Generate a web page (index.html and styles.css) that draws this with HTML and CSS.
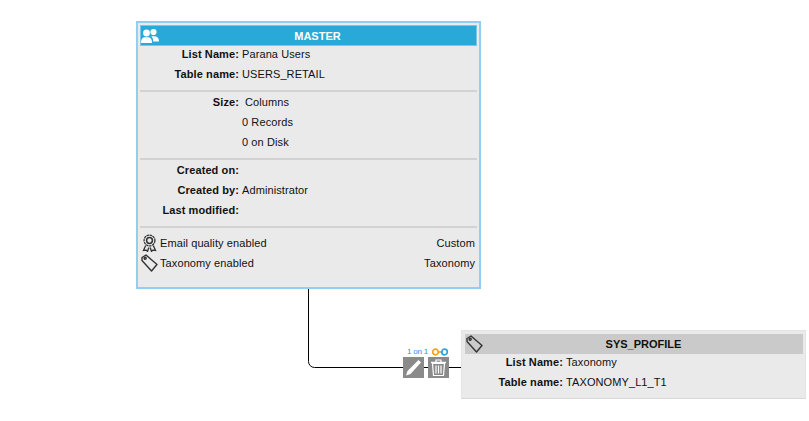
FILE: index.html
```html
<!DOCTYPE html>
<html lang="en">
<head>
<meta charset="utf-8">
<title>Data model</title>
<link rel="stylesheet" href="styles.css">
</head>
<body>
<main class="canvas">
  <svg class="wire" width="809" height="421" viewBox="0 0 809 421" aria-hidden="true">
    <path d="M308.500 289V361.500a6 6 0 0 0 6 6H461" fill="none" stroke="#000" stroke-width="1"/>
  </svg>

  <section class="node node-master">
    <header class="head head-blue">
      <svg class="head-icon" width="18" height="16" viewBox="0 0 18 16" fill="#fff"><circle cx="5.500" cy="5" r="3.400"/><path d="M0 15c0-3.500.8-5 3-5.800h5c2.200.8 3 2.300 3 5.800z"/><circle cx="12.500" cy="4" r="3.100"/><path d="M11 8.200h3.500c2.400.7 3.500 2.200 3.500 5.300h-5.800c0-2.500-.7-4-1.900-4.900z"/></svg>
      <span class="head-title">MASTER</span>
    </header>
    <div class="group">
      <div class="row"><b>List Name:</b><span>Parana Users</span></div>
      <div class="row"><b>Table name:</b><span>USERS_RETAIL</span></div>
    </div>
    <div class="group">
      <div class="row"><b>Size:</b><span class="ind">Columns</span></div>
      <div class="row"><b></b><span>0 Records</span></div>
      <div class="row"><b></b><span>0 on Disk</span></div>
    </div>
    <div class="group">
      <div class="row"><b>Created on:</b><span></span></div>
      <div class="row"><b>Created by:</b><span>Administrator</span></div>
      <div class="row"><b>Last modified:</b><span></span></div>
    </div>
    <div class="features">
      <div class="feature">
        <svg class="feature-icon" width="18" height="18" viewBox="0 0 18 18" fill="none" stroke="#333" stroke-width="1.300"><circle cx="8.500" cy="6.500" r="5.400" stroke-dasharray="2.500 .6"/><circle cx="8.500" cy="6.500" r="2.900" stroke-width="1.500"/><path d="M4.700 11.500L2.500 16.500l2.700-.4 1.300 1.400 1.300-4M12.300 11.500l2.200 5-2.700-.4-1.300 1.400-1.300-4"/></svg>
        <span class="feature-name">Email quality enabled</span><span>Custom</span>
      </div>
      <div class="feature">
        <svg class="feature-icon" width="18" height="18" viewBox="0 0 18 18" fill="none" stroke="#333" stroke-width="1.400"><path d="M1 3.500L5 1l11 9.500-5.500 6.500L1 6.500z" stroke-linejoin="round"/><circle cx="4.200" cy="4.300" r="1"/></svg>
        <span class="feature-name">Taxonomy enabled</span><span>Taxonomy</span>
      </div>
    </div>
  </section>

  <div class="link-label">1 on 1</div>
  <svg class="link-ends" width="17" height="8" viewBox="0 0 17 8" fill="none" stroke-width="1.700"><path d="M6 4h5" stroke="#777" stroke-width="1"/><circle cx="3.500" cy="4" r="2.800" stroke="#f7a11a"/><circle cx="12.500" cy="4" r="2.800" stroke="#29a9d8"/></svg>
  <button class="tool tool-edit" aria-label="Edit">
    <svg width="21" height="21" viewBox="0 0 21 21" fill="#fff"><path d="M15.500 3l2.500 2.500L7.500 17 3 18.500 4.500 14z"/></svg>
  </button>
  <button class="tool tool-trash" aria-label="Delete">
    <svg width="21" height="21" viewBox="0 0 21 21" fill="none" stroke="#fff" stroke-width="1.200"><path d="M3 5.500h15" stroke-width="1.500"/><path d="M8 5V3h5v2"/><path d="M4.500 6.500l1 12h10l1-12z"/><path d="M8 8.500v8M10.500 8.500v8M13 8.500v8"/></svg>
  </button>

  <section class="node node-profile">
    <header class="head head-grey">
      <svg class="head-icon" width="18" height="18" viewBox="0 0 18 18" fill="none" stroke="#333" stroke-width="1.400"><path d="M1 3.500L5 1l11 9.500-5.500 6.500L1 6.500z" stroke-linejoin="round"/><circle cx="4.200" cy="4.300" r="1"/></svg>
      <span class="head-title">SYS_PROFILE</span>
    </header>
    <div class="rows">
      <div class="row"><b>List Name:</b><span>Taxonomy</span></div>
      <div class="row"><b>Table name:</b><span>TAXONOMY_L1_T1</span></div>
    </div>
  </section>
</main>
</body>
</html>
```
FILE: styles.css
```css
* { box-sizing: border-box; }
html, body { margin: 0; background: #fff; }
.canvas {
  position: relative;
  width: 809px;
  height: 421px;
  overflow: hidden;
  font-family: "Liberation Sans", Arial, sans-serif;
  font-size: 11px;
  color: #111;
}
.wire { position: absolute; left: 0; top: 0; }
.node {
  position: absolute;
  background: #eaeaea;
  width: 345px;
}
.node-master {
  left: 136px;
  top: 21px;
  height: 268px;
  border: 2px solid #8ed0f2;
  padding: 2px;
}
.node-profile {
  left: 461px;
  top: 330px;
  height: 69px;
  border: 1px solid #e4e4e4;
  border-bottom-color: #d8d8d8;
  padding: 3px 2px 3px 3px;
}
.head {
  display: flex;
  align-items: center;
  font-weight: bold;
}
.head-title { flex: 1; text-align: center; }
.head-icon { flex: none; }
.head-blue {
  height: 21px;
  background: #29a9d8;
  color: #fff;
  border: 1px solid #7cc5e4;
}
.head-grey {
  height: 20px;
  padding-left: 1px;
  background: #cacaca;
}
.group {
  display: flex;
  flex-direction: column;
  gap: 4px;
  padding: 2px 0 8px;
  border-bottom: 2px solid #d2d2d2;
}
.group:first-of-type { padding-top: 0; }
.rows {
  display: flex;
  flex-direction: column;
  gap: 4px;
}
.row {
  display: grid;
  grid-template-columns: 99px 1fr;
  column-gap: 3px;
  align-items: center;
  height: 16px;
  letter-spacing: 0.1px;
}
.node-profile .row { grid-template-columns: 98px 1fr; }
.row b { text-align: right; }
.ind { padding-left: 3px; }
.features {
  display: flex;
  flex-direction: column;
  gap: 4px;
  padding-top: 7px;
}
.feature {
  display: flex;
  align-items: center;
  height: 16px;
  padding-right: 2px;
  padding-left: 1px;
  gap: 1px;
  letter-spacing: 0.1px;
}
.feature-icon { flex: none; }
.feature-name { flex: 1; }
.link-label {
  position: absolute;
  left: 407px;
  top: 347px;
  color: #2f8fe8;
  font-size: 8px;
  line-height: 10px;
  letter-spacing: -0.2px;
}
.link-ends { position: absolute; left: 432px; top: 348px; }
.tool {
  position: absolute;
  top: 357px;
  width: 21px;
  height: 21px;
  padding: 0;
  border: 0;
  background: #8a8a8a;
}
.tool svg { display: block; }
.tool-edit { left: 403px; }
.tool-trash { left: 428px; }
```
